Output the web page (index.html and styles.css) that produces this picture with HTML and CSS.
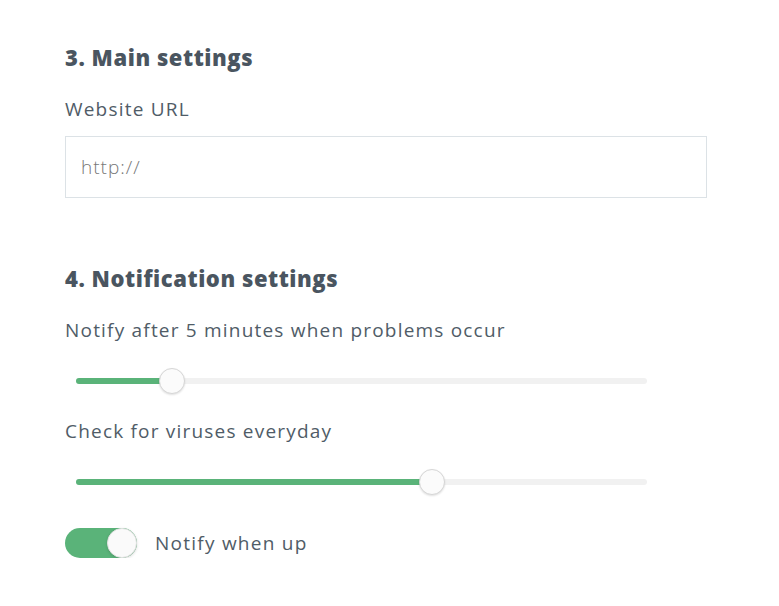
FILE: index.html
```html
<!DOCTYPE html>
<html lang="en">
<head>
    <meta charset="UTF-8">
    <meta name="viewport" content="width=device-width, initial-scale=1.0">
    <title>Settings</title>
    <link rel="stylesheet" href="styles.css">
</head>
<body>
    <div class="container">
        <h2 class="section-title">3. Main settings</h2>
        <label class="field-label" for="url">Website URL</label>
        <input class="text-input" type="text" id="url" placeholder="http://">

        <h2 class="section-title second">4. Notification settings</h2>
        <div class="field-label">Notify after 5 minutes when problems occur</div>
        <div class="slider">
            <div class="slider-track"></div>
            <div class="slider-fill" style="width: 96px"></div>
            <div class="slider-thumb" style="left: 96px"></div>
        </div>

        <div class="field-label">Check for viruses everyday</div>
        <div class="slider">
            <div class="slider-track"></div>
            <div class="slider-fill" style="width: 356px"></div>
            <div class="slider-thumb" style="left: 356px"></div>
        </div>

        <div class="toggle-row">
            <div class="toggle on">
                <div class="toggle-knob"></div>
            </div>
            <span class="toggle-label">Notify when up</span>
        </div>
    </div>
</body>
</html>
```

FILE: styles.css
```css
body {
    margin: 0;
    background-color: #fff;
    font-family: "Open Sans", "Liberation Sans", sans-serif;
    color: #4d5964;
}
.container {
    width: 642px;
    padding: 42px 0 0 65px;
    display: flex;
    flex-direction: column;
    align-items: flex-start;
}
.section-title {
    margin: 0;
    font-size: 22px;
    line-height: 30px;
    font-weight: 800;
    letter-spacing: 0.55px;
    color: #4a5560;
}
.section-title.second {
    margin-top: 65px;
}
.field-label {
    margin-top: 25px;
    font-size: 19px;
    line-height: 24px;
    letter-spacing: 1.2px;
    color: #505c67;
}
.text-input {
    box-sizing: border-box;
    margin-top: 15px;
    width: 642px;
    height: 62px;
    padding: 0 15px;
    border: 1px solid #dce2e6;
    border-radius: 0;
    font-family: inherit;
    font-size: 19px;
    font-weight: 300;
    letter-spacing: 1px;
    color: #555;
    outline: none;
}
.text-input::placeholder {
    color: #777;
}
.slider {
    position: relative;
    margin: 26px 0 0 11px;
    width: 571px;
    height: 26px;
}
.slider-track, .slider-fill {
    position: absolute;
    left: 0;
    top: 10px;
    height: 6px;
    border-radius: 3px;
}
.slider-track {
    width: 100%;
    background-color: #f1f1f1;
}
.slider-fill {
    background-color: #5ab379;
}
.slider-thumb {
    position: absolute;
    top: 0;
    width: 26px;
    height: 26px;
    margin-left: -13px;
    box-sizing: border-box;
    border: 1px solid #d6d6d6;
    border-radius: 50%;
    background-color: #fbfbfb;
    box-shadow: 0 1px 2px rgba(0, 0, 0, 0.12);
}
.toggle-row {
    display: flex;
    align-items: center;
    margin-top: 33px;
}
.toggle {
    position: relative;
    width: 72px;
    height: 30px;
    border-radius: 15px;
    background-color: #e5e5e5;
}
.toggle.on {
    background-color: #5ab379;
}
.toggle-knob {
    position: absolute;
    top: 0;
    right: 0;
    width: 30px;
    height: 30px;
    box-sizing: border-box;
    border: 1px solid #e2e2e2;
    border-radius: 50%;
    background-color: #fafafa;
    box-shadow: 0 1px 3px rgba(0, 0, 0, 0.15);
}
.toggle-label {
    margin-left: 18px;
    font-size: 19px;
    letter-spacing: 1.25px;
    color: #505c67;
}
```
